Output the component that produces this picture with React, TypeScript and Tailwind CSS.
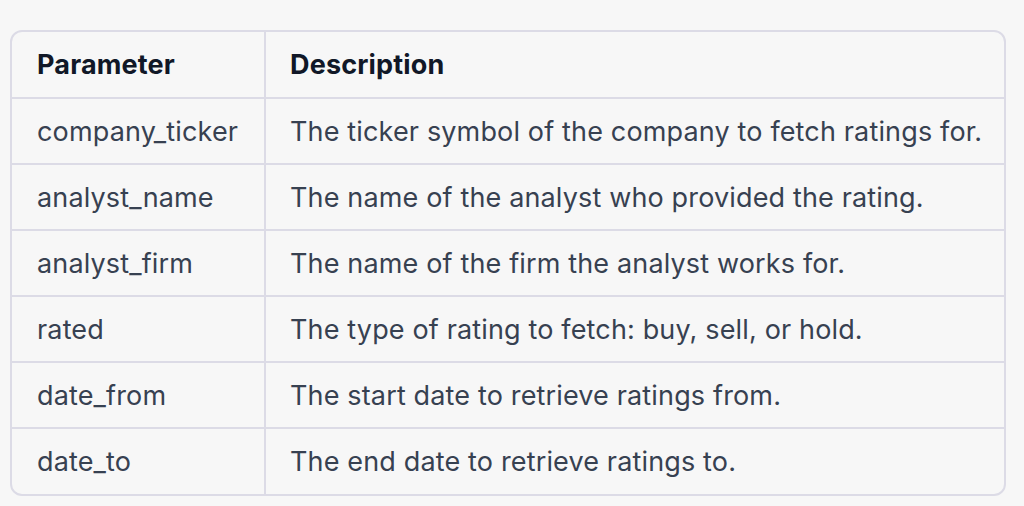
import React from 'react';

const rows = [
  ['company_ticker', 'The ticker symbol of the company to fetch ratings for.'],
  ['analyst_name', 'The name of the analyst who provided the rating.'],
  ['analyst_firm', 'The name of the firm the analyst works for.'],
  ['rated', 'The type of rating to fetch: buy, sell, or hold.'],
  ['date_from', 'The start date to retrieve ratings from.'],
  ['date_to', 'The end date to retrieve ratings to.'],
];

export default function App() {
  return (
    <div className="w-[1024px] h-[506px] bg-[#f7f7f7] pt-[30px] pl-[10px]" style={{ fontFamily: 'Inter, "Noto Sans", sans-serif' }}>
      <div className="w-[996px] rounded-xl border-2 border-[#dcdbe6] overflow-hidden">
        <table className="w-full border-collapse text-[27px] leading-none tracking-[0.15px]">
          <thead>
            <tr>
              <th className="w-[253px] h-[66px] border-r-2 border-b-2 border-[#dcdbe6] pl-[25px] text-left font-bold text-[#111827]">Parameter</th>
              <th className="h-[66px] border-b-2 border-[#dcdbe6] pl-[24px] text-left font-bold text-[#111827]">Description</th>
            </tr>
          </thead>
          <tbody>
            {rows.map(([p, d], i) => (
              <tr key={p}>
                <td className={`h-[66px] border-r-2 border-[#dcdbe6] pl-[25px] text-[#374151] ${i < rows.length - 1 ? 'border-b-2' : ''}`}>{p}</td>
                <td className={`h-[66px] border-[#dcdbe6] pl-[24px] text-[#374151] ${i < rows.length - 1 ? 'border-b-2' : ''}`}>{d}</td>
              </tr>
            ))}
          </tbody>
        </table>
      </div>
    </div>
  );
}
